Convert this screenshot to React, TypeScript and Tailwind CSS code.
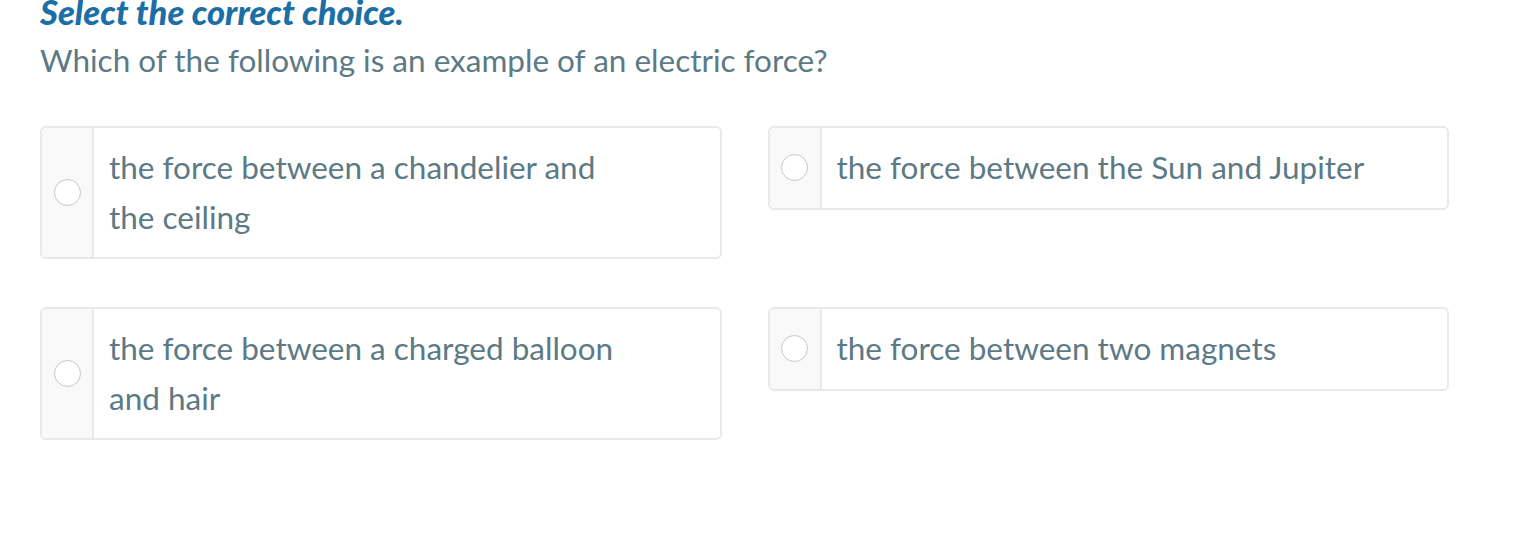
const choices = [
  "the force between a chandelier and the ceiling",
  "the force between the Sun and Jupiter",
  "the force between a charged balloon and hair",
  "the force between two magnets",
];

function Choice({ text }: { text: string }) {
  return (
    <div className="flex rounded-[6px] border-2 border-[#e9e9e9] bg-white">
      <div className="flex w-[52px] shrink-0 items-center justify-center rounded-l-[4px] border-r-2 border-[#e9e9e9] bg-[#f9f9f9]">
        <span className="block h-[27px] w-[27px] rounded-full border border-[#c6c6c6] bg-white" />
      </div>
      <div className="py-[15px] pl-[15px] pr-[79px] text-[31.5px] leading-[49.5px] text-[#5b7a85]">
        {text}
      </div>
    </div>
  );
}

export default function App() {
  return (
    <div className="min-h-[545px] bg-white pl-[40px] font-['Lato','Noto_Sans',sans-serif]">
      <h2 className="-mt-[10px] text-[34.5px] leading-[44px] font-black italic text-[#1b6fa6]">
        Select the correct choice.
      </h2>
      <p className="mt-[4px] text-[31.5px] leading-[44px] text-[#5b7a85]">
        Which of the following is an example of an electric force?
      </p>
      <div className="mt-[44px] grid w-[1409px] grid-cols-2 items-start gap-x-[46px] gap-y-[48px]">
        {choices.map((c) => (
          <Choice key={c} text={c} />
        ))}
      </div>
    </div>
  );
}
